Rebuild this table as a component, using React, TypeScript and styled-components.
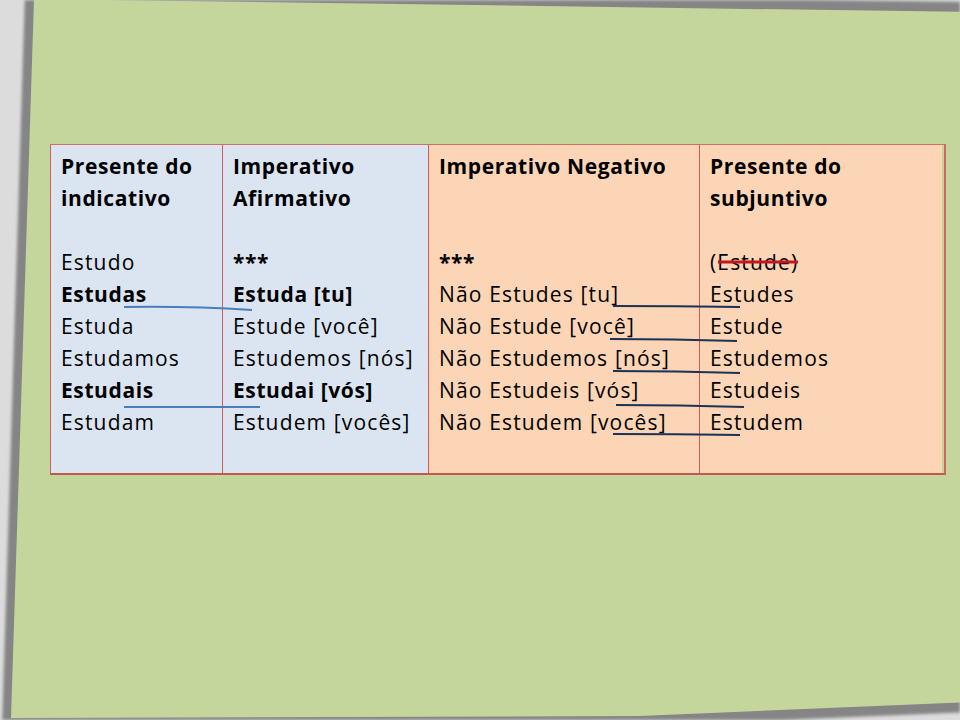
import React from 'react';
import styled, { createGlobalStyle } from 'styled-components';

type Line = { text: string; bold?: boolean };

const GlobalStyle = createGlobalStyle`
  html, body {
    margin: 0;
    padding: 0;
    background: #dcdcdc;
  }
`;

const paperShape = 'polygon(34px -1px, 970px 12px, 970px 702px, 640px 716px, 11px 718px)';
const shadowShape = 'polygon(25px -10px, 970px 2px, 970px 712px, 640px 726px, 2px 728px)';

const Stage = styled.div`
    position: relative;
    width: 960px;
    height: 720px;
    overflow: hidden;
    background: #dcdcdc;
    font-family: 'Open Sans', 'Noto Sans', sans-serif;
  `,
  ShadowBlur = styled.div`
    position: absolute;
    inset: 0;
    filter: blur(1.5px);
  `,
  ShadowShape = styled.div`
    width: 100%;
    height: 100%;
    background: #858585;
    clip-path: ${shadowShape};
  `,
  Paper = styled.div`
    position: relative;
    box-sizing: border-box;
    height: 100%;
    padding: 144px 0 0 50px;
    background: #c4d69c;
    clip-path: ${paperShape};
  `,
  TableWrap = styled.div`
    position: relative;
    width: 896px;
  `,
  Table = styled.div`
    display: grid;
    grid-template-columns: 171px 206px 271px 243px;
    border-top: 1px solid #cf6f66;
    border-bottom: 2px solid #c4574f;
    border-left: 1px solid #d4625a;
    border-right: 2px solid #c86a60;
  `,
  Cell = styled.div<{ $tone: 'blue' | 'peach'; $first?: boolean }>`
    background: ${(p) => (p.$tone === 'blue' ? '#dbe5f1' : '#fbd5b5')};
    border-left: ${(p) => (p.$first ? 'none' : '1px solid #d9595a')};
    padding: 5px 4px 35px 10px;
    color: #000;
    font-size: 21px;
    line-height: 32px;
  `,
  TextLine = styled.div<{ $bold?: boolean }>`
    font-weight: ${(p) => (p.$bold ? 700 : 400)};
    letter-spacing: ${(p) => (p.$bold ? '0.6px' : '1.15px')};
    white-space: nowrap;
    height: 32px;
  `,
  Marks = styled.svg`
    position: absolute;
    left: 0;
    top: 0;
    width: 894px;
    height: 330px;
    pointer-events: none;
    overflow: visible;
  `;

const columns: { tone: 'blue' | 'peach'; lines: Line[] }[] = [
  {
    tone: 'blue',
    lines: [
      { text: 'Presente do', bold: true },
      { text: 'indicativo', bold: true },
      { text: '' },
      { text: 'Estudo' },
      { text: 'Estudas', bold: true },
      { text: 'Estuda' },
      { text: 'Estudamos' },
      { text: 'Estudais', bold: true },
      { text: 'Estudam' },
    ],
  },
  {
    tone: 'blue',
    lines: [
      { text: 'Imperativo', bold: true },
      { text: 'Afirmativo', bold: true },
      { text: '' },
      { text: '***', bold: true },
      { text: 'Estuda [tu]', bold: true },
      { text: 'Estude [você]' },
      { text: 'Estudemos [nós]' },
      { text: 'Estudai [vós]', bold: true },
      { text: 'Estudem [vocês]' },
    ],
  },
  {
    tone: 'peach',
    lines: [
      { text: 'Imperativo Negativo', bold: true },
      { text: '' },
      { text: '' },
      { text: '***', bold: true },
      { text: 'Não Estudes [tu]' },
      { text: 'Não Estude [você]' },
      { text: 'Não Estudemos [nós]' },
      { text: 'Não Estudeis [vós]' },
      { text: 'Não Estudem [vocês]' },
    ],
  },
  {
    tone: 'peach',
    lines: [
      { text: 'Presente do', bold: true },
      { text: 'subjuntivo', bold: true },
      { text: '' },
      { text: '(Estude)' },
      { text: 'Estudes' },
      { text: 'Estude' },
      { text: 'Estudemos' },
      { text: 'Estudeis' },
      { text: 'Estudem' },
    ],
  },
];

const navyLinks = [
  [563, 162, 690, 163],
  [560, 195, 687, 197],
  [563, 227, 690, 229],
  [566, 261, 694, 263],
  [563, 290, 690, 291],
];

const App = () => (
  <>
    <GlobalStyle />
    <Stage>
      <ShadowBlur>
        <ShadowShape />
      </ShadowBlur>
      <Paper>
        <TableWrap>
          <Table>
            {columns.map((col, i) => (
              <Cell key={i} $tone={col.tone} $first={i === 0}>
                {col.lines.map((l, j) => (
                  <TextLine key={j} $bold={l.bold}>
                    {l.text}
                  </TextLine>
                ))}
              </Cell>
            ))}
          </Table>
          <Marks viewBox="0 0 894 330">
            <path d="M74 163 Q140 162 202 166" stroke="#4a7ebb" strokeWidth="2" fill="none" />
            <path d="M74 263 L210 263" stroke="#4a7ebb" strokeWidth="2" fill="none" />
            {navyLinks.map(([x1, y1, x2, y2], k) => (
              <path
                key={k}
                d={`M${x1} ${y1} Q${(x1 + x2) / 2} ${y1} ${x2} ${y2}`}
                stroke="#1c3256"
                strokeWidth="2"
                fill="none"
              />
            ))}
            <path d="M668 118 L748 118" stroke="#c0181c" strokeWidth="3" fill="none" />
          </Marks>
        </TableWrap>
      </Paper>
    </Stage>
  </>
);

export default App;
